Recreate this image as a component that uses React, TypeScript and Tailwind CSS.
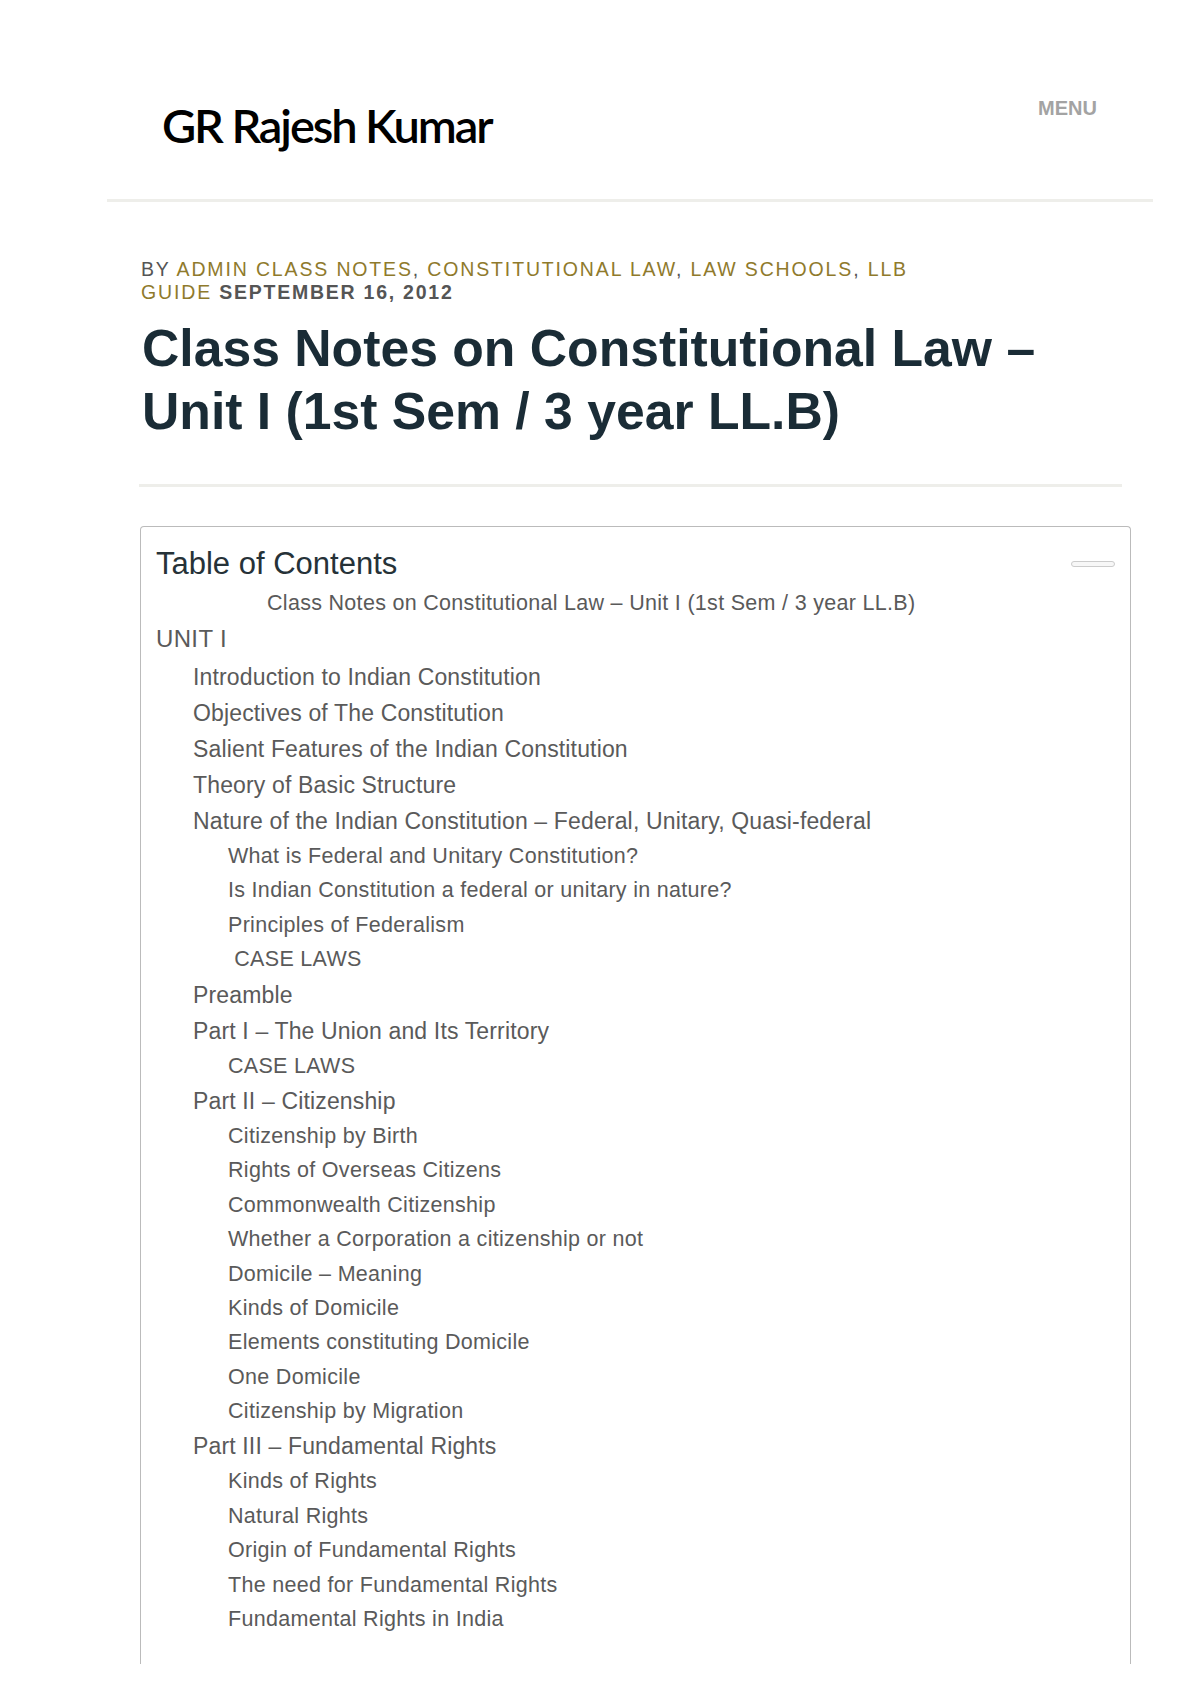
export default function App() {
  const level2 = "pl-[37px] text-[23px] h-[36px] leading-[36px] tracking-[0.15px]";
  const level3 = "pl-[72px] text-[21.5px] h-[34.4px] leading-[34.4px] tracking-[0.3px]";
  const rows: [string, string][] = [
    ["Introduction to Indian Constitution", level2],
    ["Objectives of The Constitution", level2],
    ["Salient Features of the Indian Constitution", level2],
    ["Theory of Basic Structure", level2],
    ["Nature of the Indian Constitution – Federal, Unitary, Quasi-federal", level2],
    ["What is Federal and Unitary Constitution?", level3],
    ["Is Indian Constitution a federal or unitary in nature?", level3],
    ["Principles of Federalism", level3],
    ["\u00a0CASE LAWS", level3],
    ["Preamble", level2],
    ["Part I – The Union and Its Territory", level2],
    ["CASE LAWS", level3],
    ["Part II – Citizenship", level2],
    ["Citizenship by Birth", level3],
    ["Rights of Overseas Citizens", level3],
    ["Commonwealth Citizenship", level3],
    ["Whether a Corporation a citizenship or not", level3],
    ["Domicile – Meaning", level3],
    ["Kinds of Domicile", level3],
    ["Elements constituting Domicile", level3],
    ["One Domicile", level3],
    ["Citizenship by Migration", level3],
    ["Part III – Fundamental Rights", level2],
    ["Kinds of Rights", level3],
    ["Natural Rights", level3],
    ["Origin of Fundamental Rights", level3],
    ["The need for Fundamental Rights", level3],
    ["Fundamental Rights in India", level3],
  ];
  return (
    <div className="w-[1200px] h-[1698px] bg-white overflow-hidden font-['Liberation_Sans',Arial,sans-serif]">
      <header className="ml-[107px] w-[1046px] h-[202px] border-b-[3px] border-[#eeeeea] flex justify-between pt-[96px]">
        <div className="ml-[55px] font-['Lato',sans-serif] font-semibold text-[47px] leading-[58px] tracking-[-2.1px] text-black">
          GR Rajesh Kumar
        </div>
        <div className="mr-[56px] text-[20px] font-bold leading-[22px] text-[#a3a3a3] mt-[1px]">MENU</div>
      </header>
      <main className="ml-[141px] w-[990px] pt-[56px]">
        <div className="w-[800px] text-[19.5px] leading-[23px] tracking-[1.85px] text-[#555555]">
          BY <span className="text-[#8f7a2c]">ADMIN CLASS NOTES</span>, <span className="text-[#8f7a2c]">CONSTITUTIONAL LAW</span>,{" "}
          <span className="text-[#8f7a2c]">LAW SCHOOLS</span>, <span className="text-[#8f7a2c]">LLB GUIDE</span>{" "}
          <b className="font-bold tracking-[1.75px]">SEPTEMBER 16, 2012</b>
        </div>
        <h1 className="mt-[13px] text-[51.7px] leading-[63px] font-bold text-[#1a2c36] w-[960px] ml-[1px]">
          Class Notes on Constitutional Law – Unit I (1st Sem / 3 year LL.B)
        </h1>
        <div className="mt-[41px] -ml-[2px] w-[983px] border-t-[3px] border-[#eeeeea]" />
        <section className="mt-[39px] -ml-[1px] h-[1138px] border border-b-0 border-[#bbbbbb] rounded-t-[4px] pl-[15px] pr-[15px] text-[#5a5a5a] overflow-hidden">
          <div className="flex justify-between items-center h-[57px] pt-[17px]">
            <div className="text-[31px] leading-[36px] text-[#263238]">Table of Contents</div>
            <div className="w-[44px] h-[6px] rounded-[3px] border border-[#cccccc] bg-[#f7f7f7]" />
          </div>
          <div className="pl-[111px] text-[21.5px] h-[36px] leading-[39px] tracking-[0.3px]">
            Class Notes on Constitutional Law – Unit I (1st Sem / 3 year LL.B)
          </div>
          <div className="text-[24px] h-[39px] leading-[38px] tracking-[0.35px]">UNIT I</div>
          {rows.map(([t, c], i) => (
            <div key={i} className={c}>{t}</div>
          ))}
        </section>
      </main>
    </div>
  );
}
